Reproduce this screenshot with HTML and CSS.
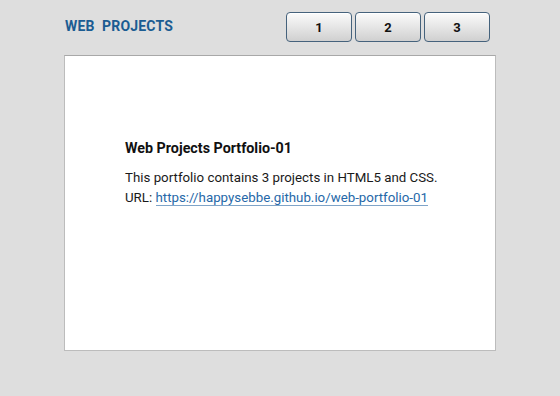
FILE: index.html
```html
<!DOCTYPE html>
<html lang="en">
<head>
  <meta charset="UTF-8">
  <title>Web Projects</title>
  <link rel="stylesheet" href="styles.css">
</head>
<body>
  <div class="page">
    <div class="header">
      <h1>WEB&nbsp; PROJECTS</h1>
      <div class="tabs">
        <button class="tab">1</button>
        <button class="tab">2</button>
        <button class="tab">3</button>
      </div>
    </div>

    <div class="panel">
      <h2>Web Projects Portfolio-01</h2>
      <p>This portfolio contains 3 projects in HTML5 and CSS.<br>
      URL: <a href="#">https://happysebbe.github.io/web-portfolio-01</a></p>
    </div>
  </div>
</body>
</html>
```

FILE: styles.css
```css
body {
  font-family: Roboto, 'Liberation Sans', sans-serif;
  margin: 0;
  padding: 0;
  background-color: #dedede;
}

.page {
  width: 432px;
  margin-left: 64px;
  padding-top: 12px;
}

.header {
  display: flex;
  justify-content: space-between;
  align-items: center;
  height: 30px;
  margin-bottom: 13px;
}

h1 {
  margin: 0 0 2px 1px;
  font-size: 14px;
  font-weight: bold;
  color: #1b5c92;
  letter-spacing: 0.2px;
}

.tabs {
  display: flex;
  gap: 3px;
  margin-right: 6px;
}

.tab {
  width: 66px;
  height: 30px;
  font-family: Roboto, 'Liberation Sans', sans-serif;
  font-size: 13px;
  font-weight: bold;
  color: #111;
  background: linear-gradient(#fbfbfb, #d0d0d0);
  border: 1px solid #45627c;
  border-radius: 4px;
  box-shadow: inset 0 1px 0 #fff;
  cursor: pointer;
}

.panel {
  background-color: #fff;
  border: 1px solid #bcbcbc;
  border-top-color: #a8a8a8;
  height: 261px;
  padding: 33px 0 0 60px;
}

h2 {
  margin: 51px 0 0;
  font-size: 14.3px;
  font-weight: bold;
  color: #111;
}

p {
  margin: 12px 0 0;
  font-size: 13.3px;
  line-height: 20px;
  color: #1a1a1a;
}

a {
  color: #2668a8;
  text-decoration: none;
  border-bottom: 1px solid #7fa4c8;
}
```
